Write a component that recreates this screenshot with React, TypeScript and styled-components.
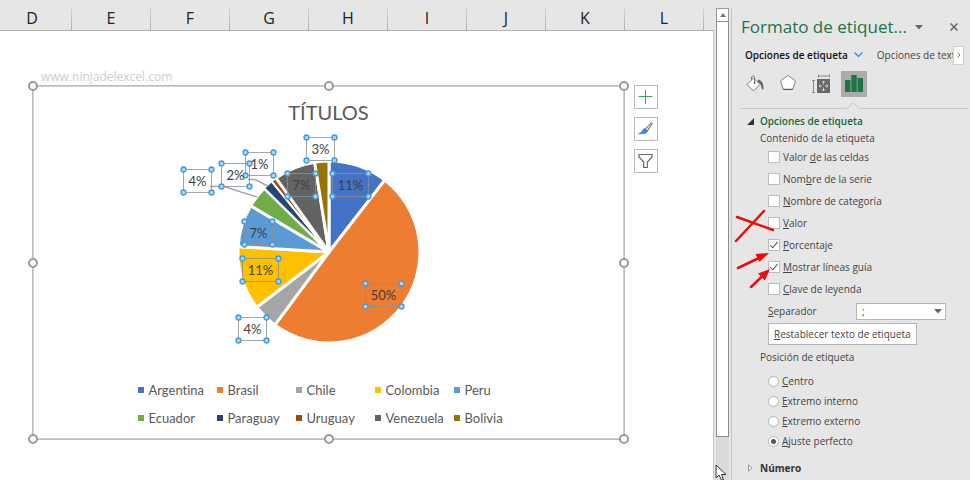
import React from 'react';
import styled, { createGlobalStyle, css } from 'styled-components';

const UI_FONT = '"Open Sans", "Noto Sans", sans-serif';
const CHART_FONT = 'Lato, "Open Sans", sans-serif';

const GlobalStyle = createGlobalStyle`
  *, *::before, *::after { box-sizing: border-box; }
  body { margin: 0; background: #e6e6e6; font-family: ${UI_FONT}; overflow: hidden; }
  button, input, select { font: inherit; color: inherit; margin: 0; }
`;

const Workspace = styled.div`
  position: relative;
  display: flex;
  min-height: 100vh;
  background: #e6e6e6;
`;

/* ---------- Worksheet ---------- */

const Sheet = styled.main`
  flex: 1;
  min-width: 0;
  display: flex;
  flex-direction: column;
`;

const ColumnHeaders = styled.div`
  display: flex;
  height: 31px;
  padding-top: 8px;
  border-bottom: 1px solid #b4b4b4;
`;

const ColumnHeader = styled.div<{ $first?: boolean }>`
  flex: none;
  width: ${(p) => (p.$first ? 72 : 79)}px;
  padding-right: ${(p) => (p.$first ? 7 : 0)}px;
  border-right: 1px solid;
  border-image: linear-gradient(#d8d8d8, #a8a8a8) 1;
  text-align: center;
  font-size: 16px;
  line-height: 21px;
  color: #222;
`;

const Cells = styled.div`
  flex: 1;
  padding: 37px 55px 39px 32px;
  background: #fff;
  border-right: 1px solid #c8c8c8;
`;

const Watermark = styled.div`
  padding-left: 9px;
  font-size: 12px;
  line-height: 17px;
  color: #cdcdcd;
`;

const ChartRow = styled.div`
  display: flex;
  align-items: flex-start;
  gap: 9px;
`;

const ChartFrame = styled.section`
  position: relative;
  flex: 1;
  display: flex;
  flex-direction: column;
  align-items: center;
  padding: 11px 0 7px;
  border: 1px solid #bdbdbd;
  box-shadow: inset 0 0 0 1px #cfcfcf;
`;

const Handle = styled.span<{ $x: number; $y: number }>`
  position: absolute;
  left: ${(p) => p.$x}%;
  top: ${(p) => p.$y}%;
  width: 10px;
  height: 10px;
  margin: -5px;
  border: 2px solid #9a9a9a;
  border-radius: 50%;
  background: #fff;
`;

const ChartTitle = styled.h1`
  margin: 0 0 3px;
  font: 400 20px/30px ${CHART_FONT};
  color: #595959;
`;

const Pie = styled.svg`
  display: block;
  width: 310px;
  height: 220px;
  font: 13px ${CHART_FONT};
`;

const Legend = styled.ul`
  display: grid;
  grid-template-columns: repeat(4, 79px) 66px;
  grid-auto-rows: 28px;
  margin: 26px 0 0;
  padding: 0;
  list-style: none;
`;

const LegendItem = styled.li<{ $color: string }>`
  display: flex;
  align-items: center;
  gap: 5px;
  font: 13px/28px ${CHART_FONT};
  font-variant-ligatures: none;
  color: #595959;
  white-space: nowrap;
  &::before {
    content: '';
    width: 6px;
    height: 6px;
    background: ${(p) => p.$color};
  }
`;

const ChartTools = styled.div`
  display: flex;
  flex-direction: column;
  gap: 8px;
`;

const ToolButton = styled.button`
  display: grid;
  place-items: center;
  width: 24px;
  height: 24px;
  padding: 0;
  border: 1px solid #b9b9b9;
  background: #fff;
`;

/* ---------- Scroll bar ---------- */

const ScrollBar = styled.div`
  flex: none;
  display: flex;
  flex-direction: column;
  width: 17px;
  padding: 8px 2px 0;
`;

const ScrollUp = styled.button`
  display: grid;
  place-items: center;
  height: 13px;
  padding: 0;
  border: 1px solid #999;
  border-bottom: 0;
  background: #fff;
`;

const ScrollThumb = styled.div`
  flex: 416;
  border: 1px solid #8e8e8e;
  background: #fff;
`;

const ScrollTrack = styled.div`
  flex: 43;
  background: #dadada;
`;

/* ---------- Format pane ---------- */

const Pane = styled.aside`
  flex: none;
  width: 239px;
  margin-top: 8px;
  padding: 6px 2px 0 9px;
  border-left: 1px solid #c6c6c6;
  color: #444;
  font-size: 10px;
`;

const PaneHeader = styled.header`
  display: flex;
  align-items: center;
  height: 26px;
`;

const PaneTitle = styled.h2`
  flex: 1;
  margin: 0;
  font-size: 17px;
  line-height: 26px;
  font-weight: 400;
  color: #217346;
  white-space: nowrap;
`;

const GlyphButton = styled.button`
  display: grid;
  place-items: center;
  width: 22px;
  height: 22px;
  padding: 0;
  border: 0;
  background: none;
`;

const HeaderButtons = styled.div`
  display: flex;
  gap: 13px;
  margin-right: 3px;
`;

const Tabs = styled.nav`
  display: flex;
  align-items: center;
  height: 20px;
  margin-top: 5px;
  padding-left: 4px;
`;

const Tab = styled.button<{ $active?: boolean }>`
  flex: none;
  display: flex;
  align-items: center;
  gap: 6px;
  padding: 0;
  border: 0;
  background: none;
  font-size: 10px;
  line-height: 18px;
  white-space: nowrap;
  ${(p) => p.$active && css`font-weight: 600; color: #111;`}
`;

const TabClip = styled.div`
  flex: 1;
  min-width: 0;
  margin-left: 14px;
  overflow: hidden;
`;

const NextTab = styled.button`
  flex: none;
  display: grid;
  place-items: center;
  width: 11px;
  height: 19px;
  margin-right: 4px;
  padding: 0;
  border: 1px solid #cfcfcf;
  background: #fff;
`;

const IconBar = styled.div`
  display: flex;
  gap: 7px;
  margin-top: 6px;
  padding-left: 1px;
`;

const IconButton = styled.button<{ $active?: boolean }>`
  display: grid;
  place-items: center;
  width: 26px;
  height: 26px;
  padding: 0;
  border: 0;
  background: ${(p) => (p.$active ? '#ababab' : 'none')};
`;

const Divider = styled.svg`
  display: block;
  width: 100%;
  height: 8px;
  margin-top: 4px;
`;

const SectionHeading = styled.button<{ $open?: boolean }>`
  display: flex;
  align-items: center;
  gap: 6px;
  margin-top: ${(p) => (p.$open ? 3 : 8)}px;
  padding: 0 0 0 6px;
  border: 0;
  background: none;
  font-weight: ${(p) => (p.$open ? 600 : 700)};
  font-size: 10px;
  line-height: 18px;
  color: ${(p) => (p.$open ? '#156a3a' : '#333')};
`;

const Group = styled.fieldset`
  margin: 0;
  padding: 0 0 0 27px;
  border: 0;
`;

const GroupTitle = styled.legend`
  margin-left: -8px;
  padding: 0;
  line-height: 16px;
`;

const Choice = styled.label<{ $height: number }>`
  display: flex;
  align-items: center;
  gap: 3px;
  height: ${(p) => p.$height}px;
  line-height: 18px;
`;

const CheckBox = styled.input.attrs({ type: 'checkbox' })`
  appearance: none;
  display: grid;
  place-items: center;
  width: 12px;
  height: 12px;
  border: 1px solid #bcbcbc;
  background: #fff;
  &:checked::after {
    content: '';
    width: 4px;
    height: 8px;
    margin-top: -2px;
    border: solid #555;
    border-width: 0 1px 1px 0;
    transform: rotate(40deg);
  }
`;

const Radio = styled.input.attrs({ type: 'radio' })`
  appearance: none;
  display: grid;
  place-items: center;
  width: 11px;
  height: 11px;
  border: 1px solid #b5b5b5;
  border-radius: 50%;
  background: #fff;
  &:checked::after {
    content: '';
    width: 5px;
    height: 5px;
    border-radius: 50%;
    background: #555;
  }
`;

const Field = styled.div`
  display: flex;
  align-items: center;
  justify-content: space-between;
  height: 22px;
  padding-right: 22px;
`;

const SelectBox = styled.div`
  display: grid;
  align-items: center;
  width: 90px;
  > * { grid-area: 1 / 1; }
  > svg { justify-self: end; margin-right: 4px; pointer-events: none; }
`;

const Select = styled.select`
  appearance: none;
  width: 100%;
  height: 17px;
  padding: 0 5px;
  border: 1px solid #b5b5b5;
  border-radius: 0;
  background: #fff;
  font-size: 10px;
  line-height: 14px;
`;

const ResetButton = styled.button`
  display: block;
  height: 22px;
  margin-top: 1px;
  padding: 0 5px;
  border: 1px solid #b5b5b5;
  background: #fff;
  font-size: 10px;
  line-height: 18px;
  white-space: nowrap;
`;

const Positions = styled(Group)`
  margin-top: 4px;
`;

const RadioList = styled.div`
  padding-top: 6px;
`;

/* Hand-drawn red marks and the pointer float over the window. */
const Marks = styled.svg`
  position: absolute;
  top: 205px;
  right: 194px;
  width: 46px;
  height: 90px;
  pointer-events: none;
`;

const Pointer = styled.svg`
  position: absolute;
  top: 464px;
  right: 243px;
  width: 12px;
  height: 16px;
`;

/* ---------- Data ---------- */

const CX = 328;
const CY = 252;
const R = 91;

const slices = [
  { name: 'Argentina', color: '#4472c4', from: 0, to: 37.8 },
  { name: 'Brasil', color: '#ed7d31', from: 37.8, to: 216.6 },
  { name: 'Chile', color: '#a5a5a5', from: 216.6, to: 232.6 },
  { name: 'Colombia', color: '#ffc000', from: 232.6, to: 273.4 },
  { name: 'Peru', color: '#5b9bd5', from: 273.4, to: 300.6 },
  { name: 'Ecuador', color: '#70ad47', from: 300.6, to: 314.6 },
  { name: 'Paraguay', color: '#264478', from: 314.6, to: 321 },
  { name: 'Uruguay', color: '#9e480e', from: 321, to: 324.4 },
  { name: 'Venezuela', color: '#636363', from: 324.4, to: 350.9 },
  { name: 'Bolivia', color: '#997300', from: 350.9, to: 360 },
];

const labels = [
  { text: '3%', x: 305, y: 137, w: 28 },
  { text: '1%', x: 244, y: 152, w: 28 },
  { text: '2%', x: 220, y: 163, w: 28 },
  { text: '4%', x: 182, y: 169, w: 28 },
  { text: '7%', x: 286, y: 173, w: 28 },
  { text: '11%', x: 331, y: 173, w: 36 },
  { text: '7%', x: 243, y: 221, w: 28 },
  { text: '11%', x: 241, y: 258, w: 36 },
  { text: '50%', x: 364, y: 283, w: 36 },
  { text: '4%', x: 237, y: 317, w: 28 },
];

const handles = [
  [0, 0], [50, 0], [100, 0], [0, 50], [100, 50], [0, 100], [50, 100], [100, 100],
];

const contents = [
  { before: 'Valor ', key: 'd', after: 'e las celdas', on: false },
  { before: 'Nom', key: 'b', after: 're de la serie', on: false },
  { before: '', key: 'N', after: 'ombre de categoría', on: false },
  { before: '', key: 'V', after: 'alor', on: false },
  { before: '', key: 'P', after: 'orcentaje', on: true },
  { before: '', key: 'M', after: 'ostrar líneas guía', on: true },
  { before: '', key: 'C', after: 'lave de leyenda', on: false },
];

const positions = [
  { key: 'C', after: 'entro' },
  { key: 'E', after: 'xtremo interno' },
  { key: 'E', after: 'xtremo externo' },
  { key: 'A', after: 'juste perfecto' },
];

const point = (deg: number) => {
  const a = (deg * Math.PI) / 180;
  return `${(CX + R * Math.sin(a)).toFixed(2)} ${(CY - R * Math.cos(a)).toFixed(2)}`;
};

const PieChart = () => (
  <Pie viewBox="173 130 310 220" role="img" aria-label="Títulos">
    {slices.map((s) => (
      <path
        key={s.name}
        d={`M${CX} ${CY}L${point(s.from)}A${R} ${R} 0 ${s.to - s.from > 180 ? 1 : 0} 1 ${point(s.to)}Z`}
        fill={s.color}
        stroke="#fff"
        strokeWidth={s.name === 'Uruguay' || s.name === 'Paraguay' ? 2 : 3}
        strokeLinejoin="round"
      />
    ))}
    <path d="M209 186.500H223L256 197M247 179.500H254L267 186" fill="none" stroke="#a6a6a6" strokeWidth="1.500" />
    {labels.map((l) => (
      <g key={`${l.x}-${l.y}`}>
        <rect x={l.x + 0.5} y={l.y + 0.5} width={l.w} height={23} fill="none" stroke="#8f8f8f" strokeOpacity=".8" />
        <text x={l.x + l.w / 2 + 0.5} y={l.y + 17} textAnchor="middle" fill="#404040">
          {l.text}
        </text>
        {[0, l.w].map((dx) =>
          [0, 23].map((dy) => (
            <circle key={`${dx}-${dy}`} cx={l.x + 0.5 + dx} cy={l.y + 0.5 + dy} r="2.500" fill="#a9d4f3" stroke="#3f9ae0" strokeWidth="1.300" />
          )),
        )}
      </g>
    ))}
  </Pie>
);

const DownTriangle = () => (
  <svg width="8" height="5" viewBox="0 0 8 5" aria-hidden="true">
    <path d="M0 0h8L4 4.500z" fill="#666" />
  </svg>
);

export default function App() {
  return (
    <>
      <GlobalStyle />
      <Workspace>
        <Sheet>
          <ColumnHeaders>
            {'DEFGHIJKL'.split('').map((c, i) => (
              <ColumnHeader key={c} $first={i === 0}>{c}</ColumnHeader>
            ))}
          </ColumnHeaders>
          <Cells>
            <Watermark>www.ninjadelexcel.com</Watermark>
            <ChartRow>
              <ChartFrame>
                <ChartTitle>TÍTULOS</ChartTitle>
                <PieChart />
                <Legend>
                  {slices.map((s) => (
                    <LegendItem key={s.name} $color={s.color}>{s.name}</LegendItem>
                  ))}
                </Legend>
                {handles.map(([x, y]) => (
                  <Handle key={`${x}-${y}`} $x={x} $y={y} />
                ))}
              </ChartFrame>
              <ChartTools>
                <ToolButton aria-label="Elementos de gráfico">
                  <svg width="16" height="16" viewBox="0 0 16 16">
                    <path d="M7.500 1v14M.5 7.500h14" stroke="#3fa45b" />
                  </svg>
                </ToolButton>
                <ToolButton aria-label="Estilos de gráfico">
                  <svg width="16" height="16" viewBox="0 0 16 16">
                    <path d="M7 8L13 2.200Q14.500 1.400 14 3L9.500 10z" fill="#ddd" stroke="#666" />
                    <path d="M7 7.500L9.500 10.500Q8 13.500 .5 12.700Q3 12.200 4 10.200Q4.800 8 7 7.500z" fill="#3b8ede" stroke="#2b70b5" strokeWidth=".6" />
                  </svg>
                </ToolButton>
                <ToolButton aria-label="Filtros de gráfico">
                  <svg width="16" height="16" viewBox="0 0 16 16">
                    <path d="M1 1.500h13v2.500L9.300 9v5.500H5.700V9L1 4z" fill="#fff" stroke="#666" strokeWidth="1.200" />
                  </svg>
                </ToolButton>
              </ChartTools>
            </ChartRow>
          </Cells>
        </Sheet>

        <ScrollBar>
          <ScrollUp aria-label="Subir">
            <svg width="6" height="4" viewBox="0 0 6 4"><path d="M0 4L3 0l3 4z" fill="#777" /></svg>
          </ScrollUp>
          <ScrollThumb />
          <ScrollTrack />
        </ScrollBar>

        <Pane>
          <PaneHeader>
            <PaneTitle>Formato de etiquet...</PaneTitle>
            <HeaderButtons>
              <GlyphButton aria-label="Opciones del panel"><DownTriangle /></GlyphButton>
              <GlyphButton aria-label="Cerrar">
                <svg width="8" height="8" viewBox="0 0 8 8">
                  <path d="M.5.5l7 7M7.500.5l-7 7" stroke="#666" strokeWidth="1.500" />
                </svg>
              </GlyphButton>
            </HeaderButtons>
          </PaneHeader>

          <Tabs>
            <Tab $active>
              Opciones de etiqueta
              <svg width="9" height="6" viewBox="0 0 9 6">
                <path d="M.5.5l4 4 4-4" fill="none" stroke="#2b88d8" strokeWidth="1.200" />
              </svg>
            </Tab>
            <TabClip><Tab>Opciones de texto</Tab></TabClip>
            <NextTab aria-label="Siguiente">
              <svg width="4" height="6" viewBox="0 0 4 6">
                <path d="M.5.5L3 3 .5 5.500" fill="none" stroke="#777" />
              </svg>
            </NextTab>
          </Tabs>

          <IconBar>
            <IconButton aria-label="Relleno y línea">
              <svg width="20" height="20" viewBox="0 0 20 20">
                <path d="M13.500 5.500Q19 7 18.500 15Q17.500 17 16.500 14Q16.500 9.500 12 7.500z" fill="#666" />
                <path d="M8.500 4L15 10.500 8.500 17 2 10.500z" fill="#fff" stroke="#777" />
                <path d="M6.500 6V3Q8 .5 9.500 3v6" fill="none" stroke="#777" />
                <circle cx="9.500" cy="9" r="1" fill="#666" />
              </svg>
            </IconButton>
            <IconButton aria-label="Efectos">
              <svg width="20" height="20" viewBox="0 0 20 20">
                <path d="M5 18l1-2.500h8l1 2.500z" fill="#f6f6f6" />
                <path d="M10 1.500l7.500 5.500-2.800 8.500H5.300L2.500 7z" fill="#fff" stroke="#858585" />
                <path d="M5.300 15.500h9.400" stroke="#666" strokeWidth="1.500" />
              </svg>
            </IconButton>
            <IconButton aria-label="Tamaño y propiedades">
              <svg width="20" height="20" viewBox="0 0 20 20">
                <path d="M1 6.500h3M2.500 6.500v12M1 18.500h3M7.500.5v3M7.500 2h11M18.500.5v3" fill="none" stroke="#8a8a8a" />
                <rect x="6" y="5" width="13" height="14" fill="#696969" />
                <path d="M11 8.500l1.500-1.500L14 8.500M11 15.500l1.500 1.500L14 15.500M9.500 10.500L8 12l1.500 1.500M15.500 10.500L17 12l-1.500 1.500M12.500 7v3.500M12.500 13.500V17M8 12h3M14 12h3" fill="none" stroke="#e6e6e6" strokeWidth=".8" />
              </svg>
            </IconButton>
            <IconButton $active aria-label="Opciones de etiqueta">
              <svg width="20" height="20" viewBox="0 0 20 20">
                <path d="M1 6h5.500v12H1zM7.300 1h5.400v17H7.300zM13.500 4H19v14h-5.500z" fill="#217346" />
              </svg>
            </IconButton>
          </IconBar>
          <Divider viewBox="0 0 227 8" preserveAspectRatio="xMinYMin slice">
            <path d="M0 7.500H106L112 1.500 118 7.500H300" fill="none" stroke="#c8c8c8" />
          </Divider>

          <SectionHeading $open aria-expanded="true">
            <svg width="7" height="7" viewBox="0 0 7 7"><path d="M7 0v7H0z" fill="#333" /></svg>
            Opciones de etiqueta
          </SectionHeading>
          <Group>
            <GroupTitle>Contenido de la etiqueta</GroupTitle>
            {contents.map((c) => (
              <Choice key={c.before + c.key + c.after} $height={22}>
                <CheckBox defaultChecked={c.on} />
                <span>{c.before}<u>{c.key}</u>{c.after}</span>
              </Choice>
            ))}
            <Field>
              <label htmlFor="separator"><u>S</u>eparador</label>
              <SelectBox>
                <Select id="separator" defaultValue=";">
                  <option>;</option>
                  <option>,</option>
                </Select>
                <DownTriangle />
              </SelectBox>
            </Field>
            <ResetButton><u>R</u>establecer texto de etiqueta</ResetButton>
          </Group>
          <Positions>
            <GroupTitle>Posición de etiqueta</GroupTitle>
            <RadioList>
              {positions.map((p, i) => (
                <Choice key={p.key + p.after} $height={20}>
                  <Radio name="position" defaultChecked={i === 3} />
                  <span><u>{p.key}</u>{p.after}</span>
                </Choice>
              ))}
            </RadioList>
          </Positions>
          <SectionHeading aria-expanded="false">
            <svg width="7" height="8" viewBox="0 0 7 8">
              <path d="M1.500.8L5 4 1.500 7.200z" fill="#fff" stroke="#888" strokeWidth=".8" />
            </svg>
            Número
          </SectionHeading>
        </Pane>

        <Marks viewBox="730 205 46 90" aria-hidden="true">
          <g fill="none" stroke="#f00a0a" strokeWidth="2.500" strokeLinecap="round">
            <path d="M737 217l36 13M764 211l-28 30" />
            <path d="M738 268l22-10.500M751 287l12-11.500" />
          </g>
          <path d="M769 253l-9.500 9-4-8zM770 269l-5 11.500-7-7z" fill="#f00a0a" />
        </Marks>
        <Pointer viewBox="0 0 12 16" aria-hidden="true">
          <path d="M1 1v13l3-3 2.500 5h2L6.500 10.500H11z" fill="#fff" stroke="#333" />
        </Pointer>
      </Workspace>
    </>
  );
}
